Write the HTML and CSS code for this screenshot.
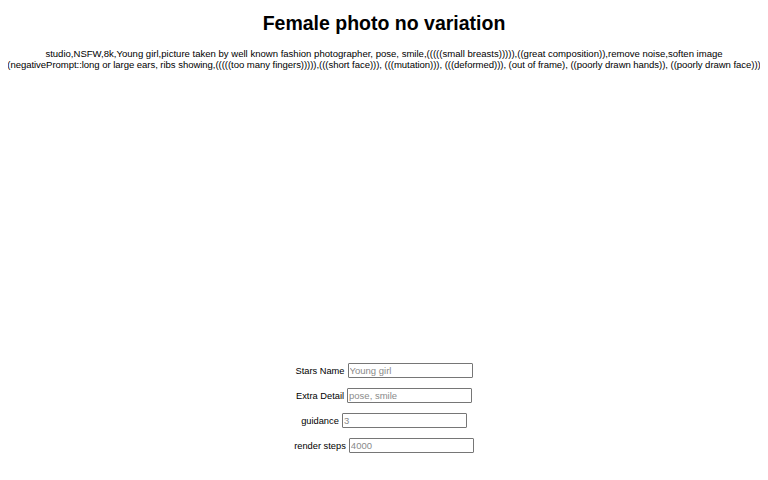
FILE: index.html
```html
<!DOCTYPE html>
<html lang="en">
<head>
    <meta charset="UTF-8">
    <meta name="viewport" content="width=device-width, initial-scale=1.0">
    <title>Female photo no variation</title>
    <link rel="stylesheet" href="styles.css">
</head>
<body>
    <h1>Female photo no variation</h1>
    <p class="prompt">
        <span class="positive">studio,NSFW,8k,Young girl,picture taken by well known fashion photographer, pose, smile,(((((small breasts))))),((great composition)),remove noise,soften image</span>
        <span class="negative">(negativePrompt::long or large ears, ribs showing,(((((too many fingers))))),(((short face))), (((mutation))), (((deformed))), (out of frame), ((poorly drawn hands)), ((poorly drawn face)))</span>
    </p>

    <!-- result goes here once rendered -->
    <div class="output"></div>

    <form class="options">
        <div class="row">
            <label for="stars">Stars Name</label>
            <input type="text" id="stars" placeholder="Young girl">
        </div>
        <div class="row">
            <label for="extra">Extra Detail</label>
            <input type="text" id="extra" placeholder="pose, smile">
        </div>
        <div class="row">
            <label for="guidance">guidance</label>
            <input type="text" id="guidance" placeholder="3">
        </div>
        <div class="row">
            <label for="steps">render steps</label>
            <input type="text" id="steps" placeholder="4000">
        </div>
    </form>
</body>
</html>
```

FILE: styles.css
```css
body {
    font-family: "Liberation Sans", Arial, sans-serif;
    background-color: #fff;
    color: #000;
    margin: 8px;
}

h1 {
    font-size: 19.5px;
    text-align: center;
    margin: 4px 0 0;
    line-height: 23px;
}

.prompt {
    font-size: 9.55px;
    line-height: 11px;
    text-align: center;
    margin: 13px -8px 0;
    white-space: nowrap;
}

.prompt span {
    display: block;
}

.prompt .negative {
    letter-spacing: -0.05px;
}

.output {
    height: 293px;
}

.options {
    font-size: 9.3px;
}

.row {
    display: flex;
    justify-content: center;
    align-items: center;
    gap: 3px;
    height: 15px;
    margin-bottom: 10px;
}

.row input {
    font-family: "Liberation Sans", Arial, sans-serif;
    font-size: 9.5px;
    width: 121px;
    height: 11px;
    padding: 1px 1px;
    border: 1px solid #767676;
    border-radius: 1px;
    margin: 0;
}

.row input::placeholder {
    color: #8a8a8a;
}
```
